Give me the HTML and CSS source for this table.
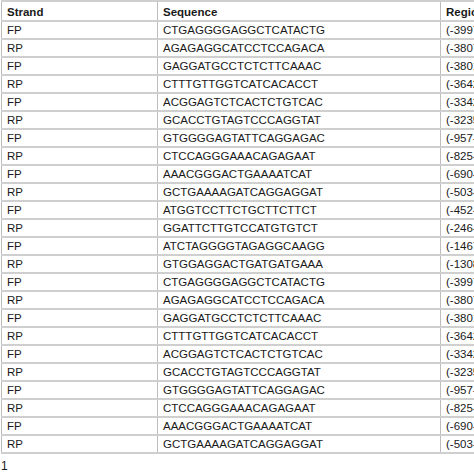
FILE: index.html
```html
<!DOCTYPE html>
<html>
<head>
<meta charset="utf-8">
<link rel="stylesheet" href="styles.css">
</head>
<body>
<div class="page">
<table class="primers">
<thead>
<tr><th class="c1">Strand</th><th class="c2">Sequence</th><th class="c3">Region</th></tr>
</thead>
<tbody>
<tr><td>FP</td><td>CTGAGGGGAGGCTCATACTG</td><td>(-3997/-3978)</td></tr>
<tr><td>RP</td><td>AGAGAGGCATCCTCCAGACA</td><td>(-3807/-3826)</td></tr>
<tr><td>FP</td><td>GAGGATGCCTCTCTTCAAAC</td><td>(-3801/-3782)</td></tr>
<tr><td>RP</td><td>CTTTGTTGGTCATCACACCT</td><td>(-3642/-3661)</td></tr>
<tr><td>FP</td><td>ACGGAGTCTCACTCTGTCAC</td><td>(-3342/-3323)</td></tr>
<tr><td>RP</td><td>GCACCTGTAGTCCCAGGTAT</td><td>(-3235/-3254)</td></tr>
<tr><td>FP</td><td>GTGGGGAGTATTCAGGAGAC</td><td>(-957-938)</td></tr>
<tr><td>RP</td><td>CTCCAGGGAAACAGAGAAT</td><td>(-825-843)</td></tr>
<tr><td>FP</td><td>AAACGGGACTGAAAATCAT</td><td>(-690-672)</td></tr>
<tr><td>RP</td><td>GCTGAAAAGATCAGGAGGAT</td><td>(-503-522)</td></tr>
<tr><td>FP</td><td>ATGGTCCTTCTGCTTCTTCT</td><td>(-452-433)</td></tr>
<tr><td>RP</td><td>GGATTCTTGTCCATGTGTCT</td><td>(-246-265)</td></tr>
<tr><td>FP</td><td>ATCTAGGGGTAGAGGCAAGG</td><td>(-1467/-1448)</td></tr>
<tr><td>RP</td><td>GTGGAGGACTGATGATGAAA</td><td>(-1308/-1327)</td></tr>
<tr><td>FP</td><td>CTGAGGGGAGGCTCATACTG</td><td>(-3997/-3978)</td></tr>
<tr><td>RP</td><td>AGAGAGGCATCCTCCAGACA</td><td>(-3807/-3826)</td></tr>
<tr><td>FP</td><td>GAGGATGCCTCTCTTCAAAC</td><td>(-3801/-3782)</td></tr>
<tr><td>RP</td><td>CTTTGTTGGTCATCACACCT</td><td>(-3642/-3661)</td></tr>
<tr><td>FP</td><td>ACGGAGTCTCACTCTGTCAC</td><td>(-3342/-3323)</td></tr>
<tr><td>RP</td><td>GCACCTGTAGTCCCAGGTAT</td><td>(-3235/-3254)</td></tr>
<tr><td>FP</td><td>GTGGGGAGTATTCAGGAGAC</td><td>(-957-938)</td></tr>
<tr><td>RP</td><td>CTCCAGGGAAACAGAGAAT</td><td>(-825-843)</td></tr>
<tr><td>FP</td><td>AAACGGGACTGAAAATCAT</td><td>(-690-672)</td></tr>
<tr><td>RP</td><td>GCTGAAAAGATCAGGAGGAT</td><td>(-503-522)</td></tr>
</tbody>
</table>
<div class="note">1</div>
</div>
</body>
</html>
```
FILE: styles.css
```css
html, body {
  margin: 0;
  padding: 0;
  background: #ffffff;
  overflow: hidden;
}
.page {
  width: 474px;
  height: 474px;
  overflow: hidden;
  font-family: "Liberation Sans", Arial, sans-serif;
  color: #1a1a1a;
}
.primers {
  border-collapse: collapse;
  table-layout: fixed;
  width: 600px;
  margin-left: 1px;
  font-size: 11.5px;
}
.primers th, .primers td {
  border-top: 2px solid #cfcfcf;
  border-bottom: 2px solid #cfcfcf;
  border-left: 1px solid #bdbdbd;
  border-right: 1px solid #bdbdbd;
  padding: 0 0 0 5px;
  height: 16px;
  line-height: 16px;
  text-align: left;
  white-space: nowrap;
  overflow: hidden;
  vertical-align: middle;
}
.primers th {
  font-weight: bold;
  height: 17px;
  padding-top: 1px;
}
.c1 { width: 150px; }
.c2 { width: 277px; }
.c3 { width: 160px; }
.note {
  font-size: 12px;
  margin-top: 5px;
  padding-left: 1px;
  line-height: 14px;
}
```
